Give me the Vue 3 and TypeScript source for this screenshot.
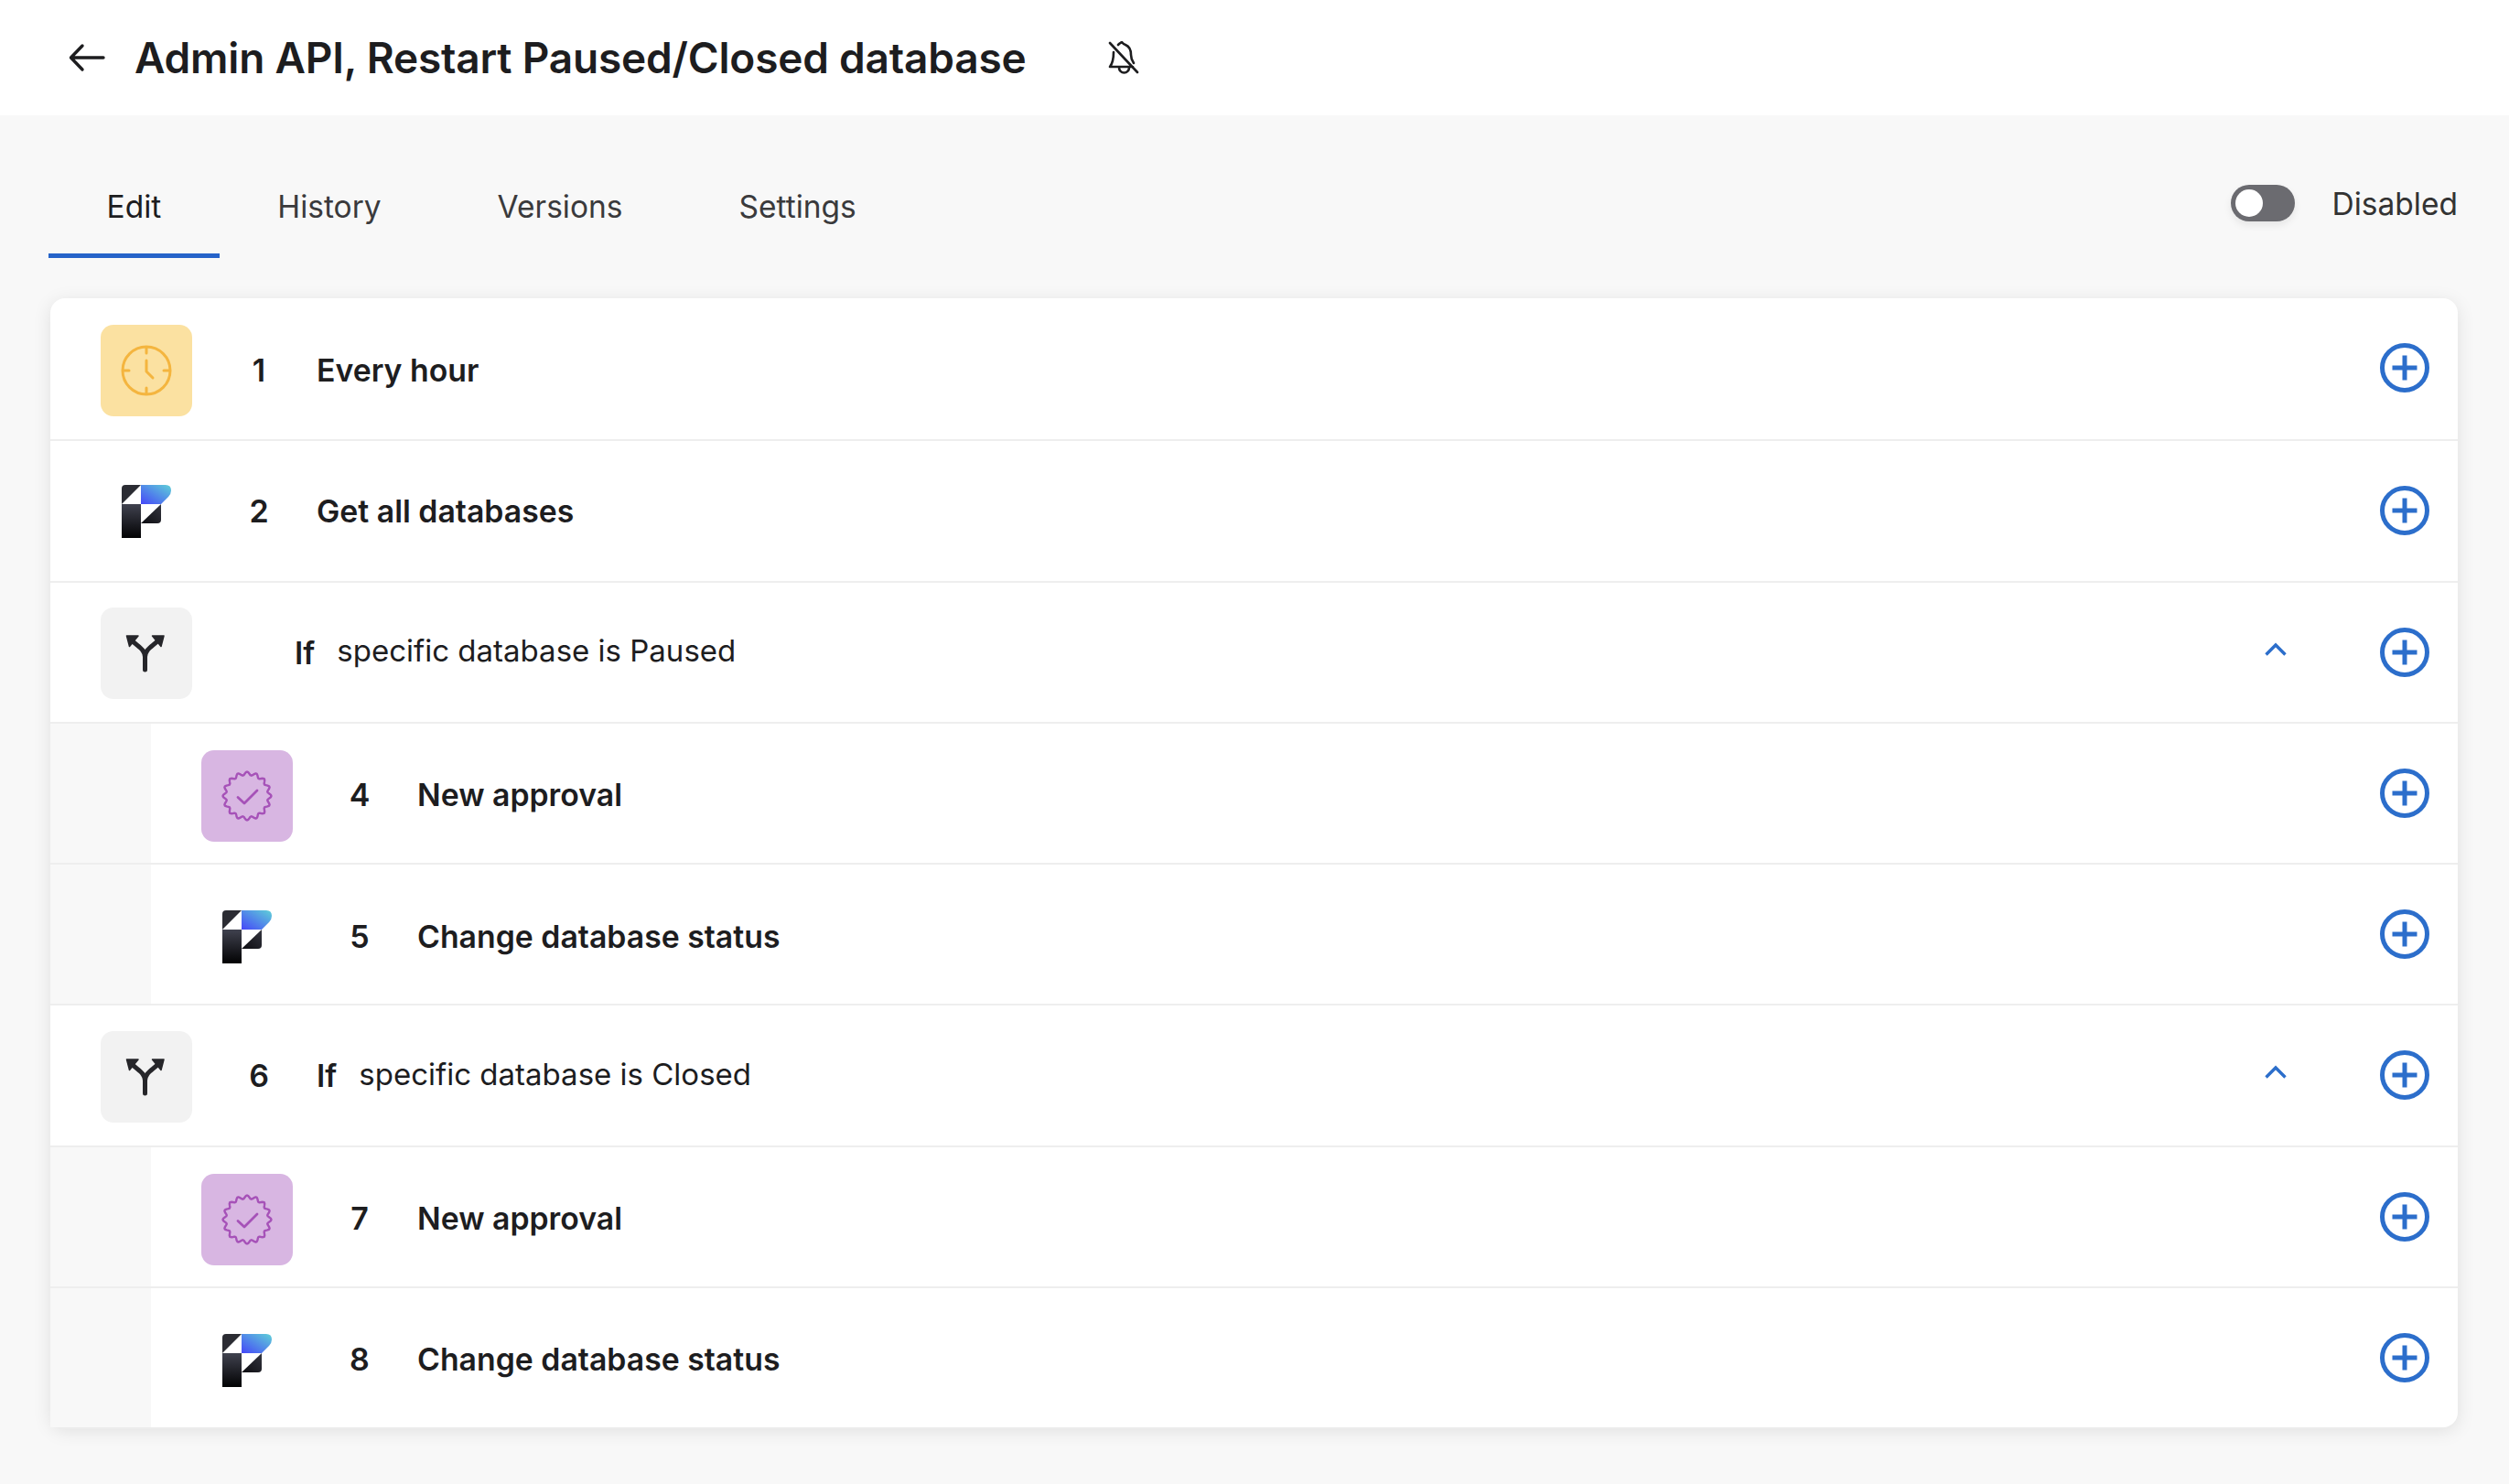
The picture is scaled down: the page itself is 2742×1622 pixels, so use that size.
<script setup lang="ts">
interface Step {
  id: number
  num: string
  label: string
  kind: 'clock' | 'logo' | 'branch' | 'approval'
  nested?: boolean
  cond?: boolean
}

const steps: Step[] = [
  { id: 1, num: '1', label: 'Every hour', kind: 'clock' },
  { id: 2, num: '2', label: 'Get all databases', kind: 'logo' },
  { id: 3, num: '', label: 'specific database is Paused', kind: 'branch', cond: true },
  { id: 4, num: '4', label: 'New approval', kind: 'approval', nested: true },
  { id: 5, num: '5', label: 'Change database status', kind: 'logo', nested: true },
  { id: 6, num: '6', label: 'specific database is Closed', kind: 'branch', cond: true },
  { id: 7, num: '7', label: 'New approval', kind: 'approval', nested: true },
  { id: 8, num: '8', label: 'Change database status', kind: 'logo', nested: true },
]

const tabs = ['Edit', 'History', 'Versions', 'Settings']

const badgePath = (() => {
  const pts: string[] = []
  for (let i = 0; i < 360; i += 3) {
    const t = (i * Math.PI) / 180
    const r = 24.6 + 1.9 * Math.cos(16 * t)
    pts.push(`${(30 + r * Math.sin(t)).toFixed(2)},${(30 - r * Math.cos(t)).toFixed(2)}`)
  }
  return `M${pts.join('L')}Z`
})()
</script>

<template>
  <div class="page">
    <header class="top">
      <svg class="back" viewBox="0 0 40 32" width="40" height="32" fill="none" stroke="#1d1d1f" stroke-width="3.4" stroke-linecap="round" stroke-linejoin="round">
        <path d="M38 16H3M15 3 2.5 16 15 29" />
      </svg>
      <h1 class="title">Admin API, Restart Paused/Closed database</h1>
      <svg class="bell" viewBox="0 0 34 36" width="34" height="36" fill="none" stroke="#1d1d1f" stroke-width="2.6" stroke-linecap="round" stroke-linejoin="round">
        <path d="M2 2 32 34M6 12c0 7-1 12-4 16v0h25M11 4c2-2 3-2 4-3 1 1 1 2 4 3 5 2 6 6 6 11 0 3 1 6 3 9M12 29a5.5 5.5 0 0 0 11 0" />
      </svg>
    </header>

    <main class="body">
      <div class="tabbar">
        <nav class="tabs">
          <a v-for="(t, i) in tabs" :key="t" class="tab" :class="{ active: i === 0 }">{{ t }}</a>
        </nav>
        <div class="status">
          <span class="toggle"><span class="knob"></span></span>
          <span class="status-text">Disabled</span>
        </div>
      </div>

      <section class="card">
        <div v-for="s in steps" :key="s.id" class="row" :class="{ nested: s.nested }">
          <div v-if="s.nested" class="band"></div>
          <div class="box" :class="s.kind">
            <svg v-if="s.kind === 'clock'" viewBox="0 0 60 60" width="60" height="60" fill="none" stroke="#f4b53f" stroke-width="3" stroke-linecap="round" stroke-linejoin="round">
              <circle cx="30" cy="30" r="26" />
              <path d="M30 5v6M30 49v6M5 30h6M49 30h6" />
              <path d="M30 19v12l7 7" />
            </svg>
            <svg v-else-if="s.kind === 'logo'" viewBox="0 0 54 58" width="54" height="58">
              <defs>
                <linearGradient :id="`dark-${s.id}`" x1="0" y1="0" x2="0" y2="1">
                  <stop offset="0" stop-color="#40424f" />
                  <stop offset="1" stop-color="#020203" />
                </linearGradient>
                <linearGradient :id="`tri-${s.id}`" x1="1" y1="0" x2="0" y2="1">
                  <stop offset="0" stop-color="#34353f" />
                  <stop offset="1" stop-color="#0c0c10" />
                </linearGradient>
                <linearGradient :id="`blue-${s.id}`" x1="0" y1="1" x2="1" y2="0">
                  <stop offset="0" stop-color="#4547f8" />
                  <stop offset="1" stop-color="#5fd0d8" />
                </linearGradient>
              </defs>
              <path d="M21 0H4Q0 0 0 4V21Z" fill="#2b2c33" />
              <rect x="0" y="21" width="21" height="37" :fill="`url(#dark-${s.id})`" />
              <path d="M21 0H48Q54 0 54 6Q54 10 51 13L43 21H21Z" :fill="`url(#blue-${s.id})`" />
              <path d="M43 21V38Q43 42 39 42H21Z" :fill="`url(#tri-${s.id})`" />
            </svg>
            <svg v-else-if="s.kind === 'branch'" viewBox="0 0 100 100" width="100" height="100">
              <path d="M48.5 68V54C48.5 46 41 43 34 36M48.5 54C48.5 46 56 43 63 36" fill="none" stroke="#26262a" stroke-width="5" stroke-linecap="round" />
              <path d="M28.5 31H41L31.5 42.5Z" fill="#26262a" stroke="#26262a" stroke-width="1.5" stroke-linejoin="round" />
              <path d="M69 31H56.5L66 42.5Z" fill="#26262a" stroke="#26262a" stroke-width="1.5" stroke-linejoin="round" />
            </svg>
            <svg v-else viewBox="0 0 60 60" width="60" height="60" fill="none" stroke="#a652b8" stroke-width="2.4" stroke-linecap="round" stroke-linejoin="round">
              <path :d="badgePath" />
              <path d="M20 31.5 27 38 41 24" stroke-width="2.8" />
            </svg>
          </div>
          <span class="num" :class="{ empty: !s.num }">{{ s.num }}</span>
          <span v-if="s.cond" class="if">If</span>
          <span class="label" :class="{ plain: s.cond }">{{ s.label }}</span>
          <svg v-if="s.cond" class="chev" viewBox="0 0 24 16" width="24" height="16" fill="none" stroke="#2c6ecb" stroke-width="3.4" stroke-linejoin="miter">
            <path d="M1.5 13.5 12 3l10.5 10.5" />
          </svg>
          <svg class="plus" viewBox="0 0 54 54" width="54" height="54" fill="none" stroke="#2c6ecb" stroke-width="5">
            <circle cx="27" cy="27" r="24.5" />
            <path d="M27 13.5v27M13.5 27h27" />
          </svg>
        </div>
      </section>
    </main>
  </div>
</template>

<style scoped>
.page {
  min-height: 1622px;
  background: #f8f8f8;
  font-family: Inter, "Noto Sans", sans-serif;
  color: #1d1d1f;
}
.top {
  height: 126px;
  background: #fff;
  display: flex;
  align-items: center;
  padding-left: 75px;
}
.back { margin-right: 32px; }
.title {
  margin: -1px 0 0;
  font-size: 46px;
  font-weight: 570;
  letter-spacing: -0.2px;
  white-space: nowrap;
}
.bell { margin-left: 89px; }
.body { padding: 0 56px 0 55px; }
.tabbar {
  height: 156px;
  display: flex;
  justify-content: space-between;
}
.tabs { display: flex; align-items: flex-end; margin-left: -2px; }
.tab {
  height: 109px;
  box-sizing: border-box;
  padding: 30px 63.5px 0;
  font-size: 33.5px;
  line-height: 46px;
  color: #3a3a3c;
  border-bottom: 5px solid transparent;
}
.tab.active { color: #1d1d1f; border-bottom-color: #2563c9; }
.status {
  display: flex;
  align-items: center;
  height: 40px;
  margin-top: 76px;
}
.toggle {
  width: 70px;
  height: 40px;
  box-sizing: border-box;
  padding: 5px;
  border-radius: 20px;
  background: #6b6b70;
  box-shadow: 0 4px 8px rgba(0, 0, 0, .08);
}
.knob {
  display: block;
  width: 30px;
  height: 30px;
  border-radius: 50%;
  background: #fff;
}
.status-text {
  margin-left: 41px;
  margin-top: 2px;
  font-size: 33.5px;
  color: #333;
}
.card {
  margin-top: 44px;
  background: #fff;
  border-radius: 16px;
  box-shadow: 0 2px 0 #ececec, 0 4px 20px rgba(0, 0, 0, .1);
}
.row {
  height: 154.25px;
  box-sizing: border-box;
  display: flex;
  align-items: center;
  padding-left: 55px;
  padding-right: 31px;
  border-top: 2px solid #eeeeee;
}
.row:first-child { border-top-color: transparent; }
.row.nested { padding-left: 0; }
.band {
  align-self: stretch;
  width: 110px;
  background: #f8f8f8;
  margin-right: 55px;
}
.box {
  width: 100px;
  height: 100px;
  flex: none;
  margin-top: 2px;
  border-radius: 14px;
  display: flex;
  align-items: center;
  justify-content: center;
}
.box.branch { margin-top: 3px; }
.nested .box { margin-top: 6px; }
.clock { background: #fbe1a1; }
.branch { background: #f2f2f2; }
.approval { background: #d8b6e2; }
.num {
  width: 66px;
  margin: 1px 30px 0 40px;
  text-align: center;
  font-size: 34px;
  font-weight: 570;
}
.nested .num, .nested .label { margin-top: 4px; }
.num.empty { width: 42px; }
.if {
  font-size: 33.5px;
  font-weight: 600;
  margin-right: 24px;
  margin-top: 2px;
}
.label {
  margin-top: 1px;
  font-size: 33.8px;
  font-weight: 570;
  white-space: nowrap;
}
.label.plain { font-size: 33px; font-weight: 400; margin-top: -3px; }
.chev { margin-left: auto; margin-right: 102px; margin-top: -6px; }
.plus { margin-left: auto; }
.row:first-child .plus { margin-bottom: 4px; }
.chev + .plus { margin-left: 0; }
</style>

<style>
html, body { margin: 0; background: #f8f8f8; }
</style>
